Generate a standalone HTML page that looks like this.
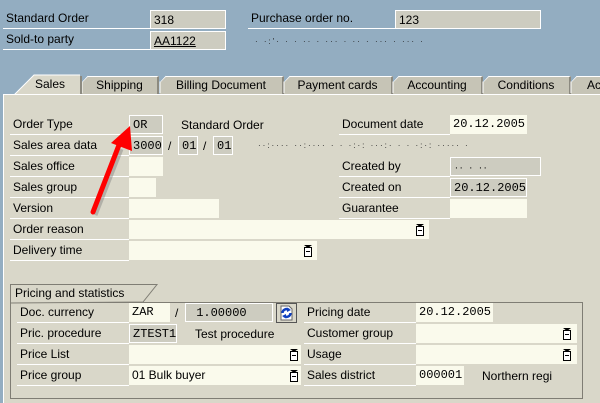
<!DOCTYPE html>
<html><head><meta charset="utf-8"><style>
*{margin:0;padding:0;box-sizing:border-box}
body{width:600px;height:403px;overflow:hidden;background:#93adc1;font-family:"Liberation Sans",sans-serif;font-size:12px;color:#000;position:relative}
.a{position:absolute;white-space:nowrap}
.lb{position:absolute;height:20px;line-height:19px;padding-left:3px;border-bottom:1px solid #fff}
.f{position:absolute;height:19px;line-height:18px;padding-left:3px;font-family:"Liberation Mono",monospace;font-size:12px}
.g{background:#cdccc0;border:1px solid #fff}
.c{background:#fafaec}
.tab{position:absolute;top:76px;height:18px;background:#c6c4b6;border-top:1px solid #fff;border-right:2px solid #8c8a80;text-align:center;line-height:17px;font-size:12px}
.ic{position:absolute;width:8px;height:10px;border:1px solid #000;background:#fff}
.ic:before{content:"";position:absolute;left:-1px;top:-3px;width:0;height:0;border-left:4px solid transparent;border-right:4px solid transparent;border-top:3px solid #000}
.ic:after{content:"";position:absolute;left:1px;top:3px;width:4px;height:4px;border-top:1px solid #000;border-bottom:1px solid #000}
.bl{position:absolute;font-size:8px;color:#222;letter-spacing:2px}
</style></head><body>
<!-- header -->
<div class="lb" style="left:3px;top:9px;width:147px;border-color:#fff">Standard Order</div>
<div class="f g" style="left:150px;top:10px;width:76px;font-family:'Liberation Sans';">318</div>
<div class="lb" style="left:3px;top:30px;width:147px">Sold-to party</div>
<div class="f g" style="left:150px;top:31px;width:76px;font-family:'Liberation Sans';"><u>AA1122</u></div>
<div class="lb" style="left:248px;top:9px;width:147px">Purchase order no.</div>
<div class="f g" style="left:395px;top:10px;width:146px;font-family:'Liberation Sans';">123</div>
<div class="bl" style="left:255px;top:37px">· ·:'· ·   · ·· · ··· ·   ·· · ··· · ··· ·</div>
<!-- tabs -->
<div class="tab" style="left:82px;width:77px">Shipping</div>
<div class="tab" style="left:160px;width:124px">Billing Document</div>
<div class="tab" style="left:284px;width:109px">Payment cards</div>
<div class="tab" style="left:393px;width:90px">Accounting</div>
<div class="tab" style="left:483px;width:88px">Conditions</div>
<div class="tab" style="left:571px;width:40px;text-align:left;padding-left:16px">Ac</div>
<svg class="a" style="left:0;top:0" width="600" height="403">
<g fill="#93adc1" stroke="#fff">
<polyline points="82,93 82,82 88,76" fill="none"/>
<polyline points="160,93 160,82 166,76" fill="none"/>
<polyline points="284,93 284,82 290,76" fill="none"/>
<polyline points="393,93 393,82 399,76" fill="none"/>
<polyline points="483,93 483,82 489,76" fill="none"/>
<polyline points="571,93 571,82 577,76" fill="none"/>
</g>
<g fill="#93adc1">
<polygon points="82,75.5 82,82 88,75.5"/>
<polygon points="160,75.5 160,82 166,75.5"/>
<polygon points="284,75.5 284,82 290,75.5"/>
<polygon points="393,75.5 393,82 399,75.5"/>
<polygon points="483,75.5 483,82 489,75.5"/>
<polygon points="571,75.5 571,82 577,75.5"/>
</g>
<polygon points="14,95 34,75 80,75 80,95" fill="#d9d7c9"/>
<polyline points="14,95 34,75 80,75" fill="none" stroke="#fff"/>
<line x1="81" y1="76" x2="81" y2="95" stroke="#8c8a80" stroke-width="2"/>
</svg>
<div class="a" style="left:35px;top:77px;font-size:12px">Sales</div>
<!-- panel -->
<div class="a" style="left:3px;top:94px;width:597px;height:309px;background:#d9d7c9;border-top:1px solid #fff;border-left:1px solid #fff"></div>
<svg class="a" style="left:82px;top:94px" width="520" height="2"><line x1="0" y1="0.5" x2="520" y2="0.5" stroke="#fff"/></svg>
<!-- rows left -->
<div class="lb" style="left:10px;top:115px;width:119px">Order Type</div>
<div class="f g" style="left:129px;top:115px;width:34px">OR</div>
<div class="a" style="left:181px;top:118px">Standard Order</div>
<div class="lb" style="left:339px;top:115px;width:111px">Document date</div>
<div class="f c" style="left:450px;top:115px;width:77px">20.12.2005</div>

<div class="lb" style="left:10px;top:136px;width:119px">Sales area data</div>
<div class="f g" style="left:129px;top:136px;width:34px">3000</div>
<div class="a" style="left:168px;top:139px">/</div>
<div class="f g" style="left:178px;top:136px;width:20px">01</div>
<div class="a" style="left:203px;top:139px">/</div>
<div class="f g" style="left:213px;top:136px;width:20px">01</div>
<div class="bl" style="left:258px;top:141px">··:···· ··:···· ·   · ·:·: ···:· ·   · ·:·: ····· ·</div>

<div class="lb" style="left:10px;top:157px;width:119px">Sales office</div>
<div class="f c" style="left:129px;top:157px;width:34px"></div>
<div class="lb" style="left:339px;top:157px;width:111px">Created by</div>
<div class="f g" style="left:450px;top:157px;width:91px"><span style="font-size:8px">·· · ··</span></div>

<div class="lb" style="left:10px;top:178px;width:119px">Sales group</div>
<div class="f c" style="left:129px;top:178px;width:27px"></div>
<div class="lb" style="left:339px;top:178px;width:111px">Created on</div>
<div class="f g" style="left:450px;top:178px;width:77px">20.12.2005</div>

<div class="lb" style="left:10px;top:199px;width:119px">Version</div>
<div class="f c" style="left:129px;top:199px;width:90px"></div>
<div class="lb" style="left:339px;top:199px;width:111px">Guarantee</div>
<div class="f c" style="left:450px;top:199px;width:77px"></div>

<div class="lb" style="left:10px;top:220px;width:119px">Order reason</div>
<div class="f c" style="left:129px;top:220px;width:300px"></div>
<div class="ic" style="left:416px;top:226px"></div>

<div class="lb" style="left:10px;top:241px;width:119px">Delivery time</div>
<div class="f c" style="left:129px;top:241px;width:188px"></div>
<div class="ic" style="left:304px;top:247px"></div>

<!-- pricing group -->
<div class="a" style="left:10px;top:302px;width:573px;height:97px;border:1px solid #7f7d74"></div>
<svg class="a" style="left:10px;top:284px" width="150" height="20">
<polygon points="0.5,19 0.5,0.5 147,0.5 133,18" fill="#d9d7c9" stroke="#7f7d74"/>
</svg>
<div class="a" style="left:15px;top:286px">Pricing and statistics</div>

<div class="lb" style="left:17px;top:303px;width:112px">Doc. currency</div>
<div class="f c" style="left:129px;top:303px;width:41px">ZAR</div>
<div class="a" style="left:175px;top:306px">/</div>
<div class="f g" style="left:185px;top:303px;width:88px">&nbsp;1.00000</div>
<svg class="a" style="left:276px;top:303px" width="21" height="20"><rect x="0.5" y="0.5" width="20" height="19" fill="#d9d7c9" stroke="#555"/><polygon points="5,3 13,3 16,6 16,17 5,17" fill="#fff" stroke="#666"/><path d="M6.5,10 A4,4 0 0 1 13,7" fill="none" stroke="#1040c0" stroke-width="2.5"/><path d="M14.5,10 A4,4 0 0 1 8,13" fill="none" stroke="#1040c0" stroke-width="2.5"/><polygon points="11,4.5 15,7 11,9" fill="#1040c0"/><polygon points="10,11 6,13 10,15.5" fill="#1040c0"/></svg>
<div class="lb" style="left:304px;top:303px;width:112px">Pricing date</div>
<div class="f c" style="left:416px;top:303px;width:77px">20.12.2005</div>

<div class="lb" style="left:17px;top:324px;width:112px">Pric. procedure</div>
<div class="f g" style="left:129px;top:324px;width:48px">ZTEST1</div>
<div class="a" style="left:195px;top:327px">Test procedure</div>
<div class="lb" style="left:304px;top:324px;width:112px">Customer group</div>
<div class="f c" style="left:416px;top:324px;width:161px"></div>
<div class="ic" style="left:563px;top:330px"></div>

<div class="lb" style="left:17px;top:345px;width:112px">Price List</div>
<div class="f c" style="left:129px;top:345px;width:172px"></div>
<div class="ic" style="left:290px;top:351px"></div>
<div class="lb" style="left:304px;top:345px;width:112px">Usage</div>
<div class="f c" style="left:416px;top:345px;width:161px"></div>
<div class="ic" style="left:563px;top:351px"></div>

<div class="lb" style="left:17px;top:366px;width:112px">Price group</div>
<div class="f c" style="left:129px;top:366px;width:172px;font-family:'Liberation Sans'">01 Bulk buyer</div>
<div class="ic" style="left:290px;top:372px"></div>
<div class="lb" style="left:304px;top:366px;width:112px">Sales district</div>
<div class="f c" style="left:416px;top:366px;width:48px">000001</div>
<div class="a" style="left:482px;top:369px">Northern regi</div>

<!-- red arrow -->
<svg class="a" style="left:0;top:0" width="600" height="403">
<line x1="95" y1="215" x2="121" y2="149" stroke="#777" stroke-width="5" opacity="0.4"/>
<line x1="93" y1="212" x2="119" y2="145" stroke="#f00" stroke-width="5" stroke-linecap="round"/>
<polygon points="130,126 111,143 132,151" fill="#f00"/>
</svg>
</body></html>
